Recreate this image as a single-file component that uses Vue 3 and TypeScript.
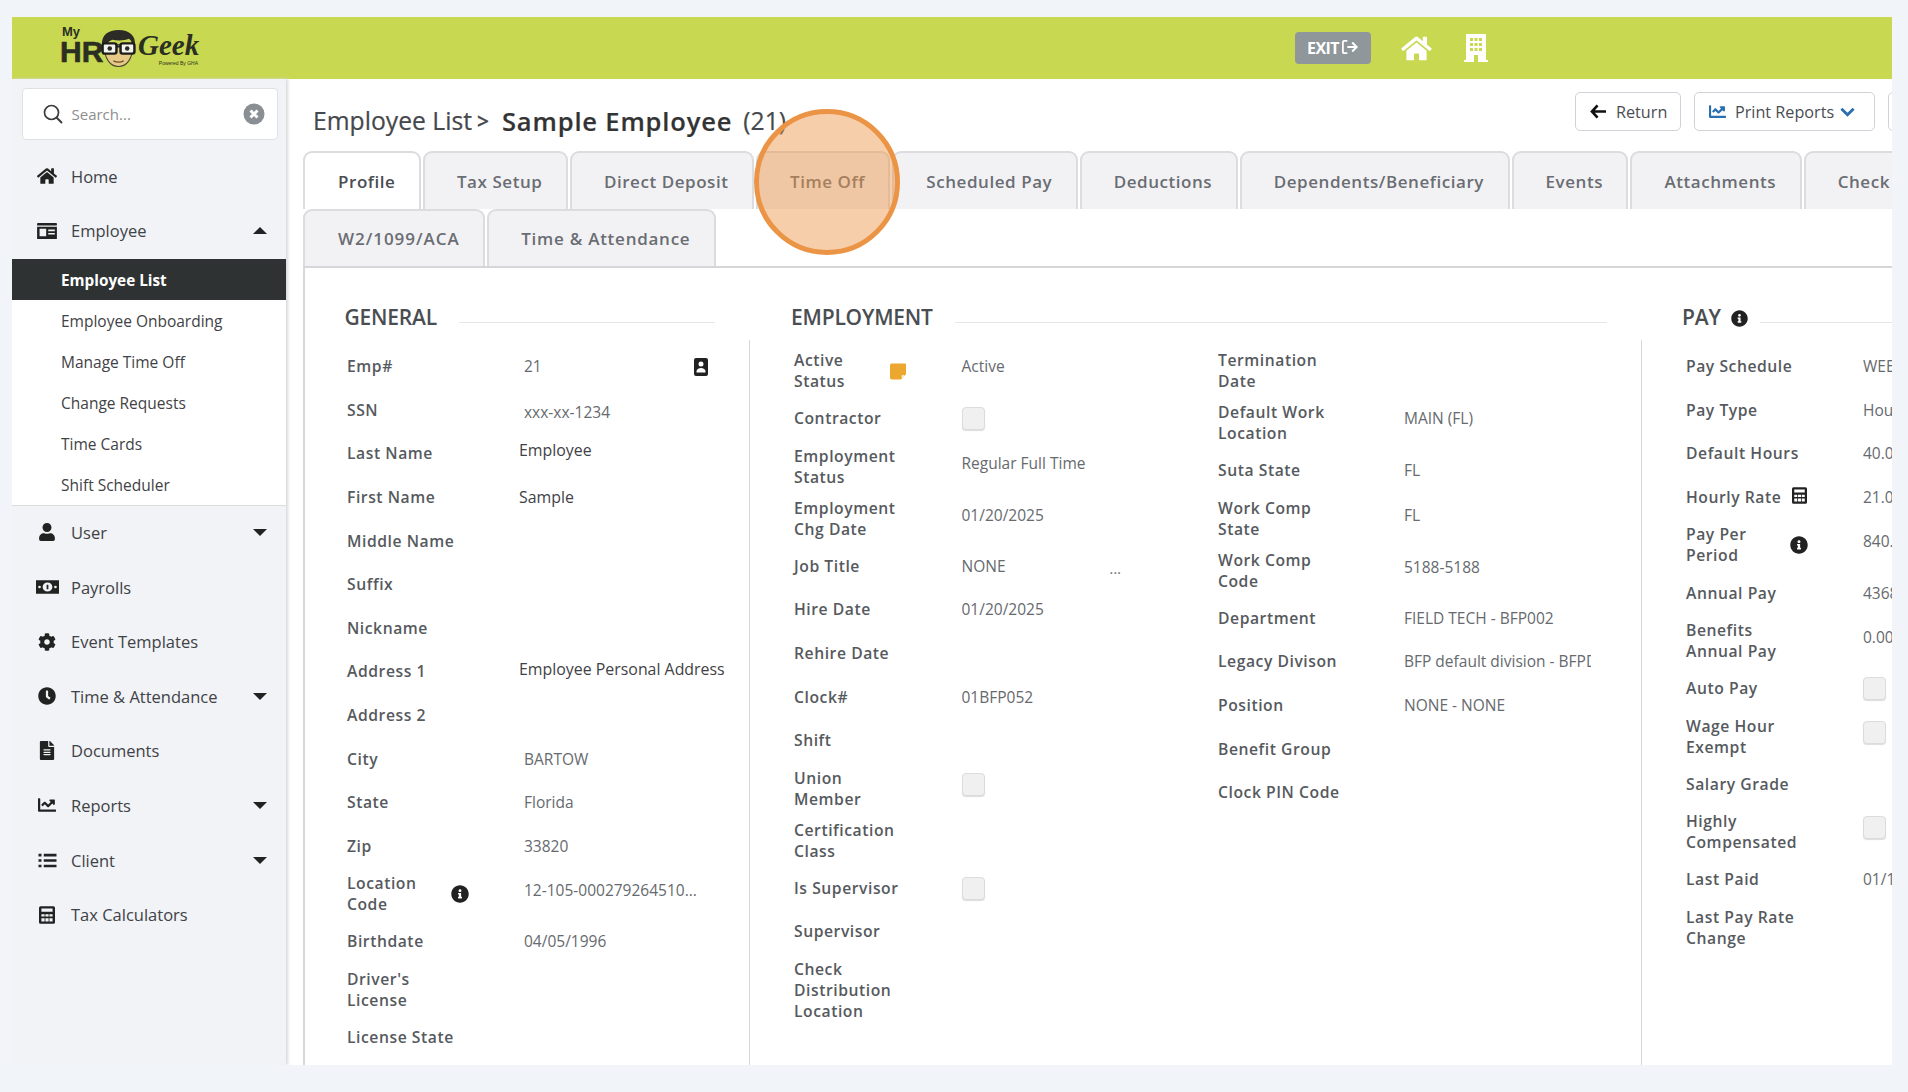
<script setup lang="ts">
type IconKey = keyof typeof icons
interface Row { l: string; v?: string; icon?: IconKey; check?: boolean; cls?: string; more?: boolean }

const icons = {
  home: { box: '0 0 576 512', d: 'M280.37 148.26L96 300.11V464a16 16 0 0 0 16 16l112.06-.29a16 16 0 0 0 15.92-16V368a16 16 0 0 1 16-16h64a16 16 0 0 1 16 16v95.64a16 16 0 0 0 16 16.05L464 480a16 16 0 0 0 16-16V300L295.67 148.26a12.19 12.19 0 0 0-15.3 0zM571.6 251.47L488 182.56V44.05a12 12 0 0 0-12-12h-56a12 12 0 0 0-12 12v72.61L318.47 43a48 48 0 0 0-61 0L4.34 251.47a12 12 0 0 0-1.6 16.9l25.5 31A12 12 0 0 0 45.15 301l235.22-193.74a12.19 12.19 0 0 1 15.3 0L530.9 301a12 12 0 0 0 16.9-1.6l25.5-31a12 12 0 0 0-1.7-16.93z' },
  user: { box: '0 0 448 512', d: 'M224 256c70.7 0 128-57.3 128-128S294.7 0 224 0 96 57.3 96 128s57.3 128 128 128zm89.6 32h-16.7c-22.2 10.2-46.9 16-72.9 16s-50.6-5.8-72.9-16h-16.7C60.2 288 0 348.2 0 422.4V464c0 26.5 21.5 48 48 48h352c26.5 0 48-21.5 48-48v-41.6c0-74.2-60.2-134.4-134.4-134.4z' },
  info: { box: '0 0 512 512', d: 'M256 8C119.043 8 8 119.083 8 256c0 136.997 111.043 248 248 248s248-111.003 248-248C504 119.083 392.957 8 256 8zm0 110c23.196 0 42 18.804 42 42s-18.804 42-42 42-42-18.804-42-42 18.804-42 42-42zm56 254c0 6.627-5.373 12-12 12h-88c-6.627 0-12-5.373-12-12v-24c0-6.627 5.373-12 12-12h12v-64h-12c-6.627 0-12-5.373-12-12v-24c0-6.627 5.373-12 12-12h64c6.627 0 12 5.373 12 12v100h12c6.627 0 12 5.373 12 12v24z' },
  clock: { box: '0 0 512 512', d: 'M256,8C119,8,8,119,8,256S119,504,256,504,504,393,504,256,393,8,256,8Zm92.49,313h0l-20,25a16,16,0,0,1-22.49,2.5h0l-67-49.72a40,40,0,0,1-15-31.23V112a16,16,0,0,1,16-16h32a16,16,0,0,1,16,16V256l58,42.5A16,16,0,0,1,348.49,321Z' },
  file: { box: '0 0 384 512', d: 'M224 136V0H24C10.7 0 0 10.7 0 24v464c0 13.3 10.7 24 24 24h336c13.3 0 24-10.7 24-24V160H248c-13.2 0-24-10.8-24-24zm64 236c0 6.6-5.4 12-12 12H108c-6.6 0-12-5.4-12-12v-8c0-6.6 5.4-12 12-12h168c6.6 0 12 5.4 12 12v8zm0-64c0 6.6-5.4 12-12 12H108c-6.6 0-12-5.4-12-12v-8c0-6.6 5.4-12 12-12h168c6.6 0 12 5.4 12 12v8zm0-72v8c0 6.6-5.4 12-12 12H108c-6.6 0-12-5.4-12-12v-8c0-6.6 5.4-12 12-12h168c6.6 0 12 5.4 12 12zm96-114.1v6.1H256V0h6.1c6.4 0 12.5 2.5 17 7l97.9 98c4.5 4.5 7 10.6 7 16.9z' },
  chart: { box: '0 0 512 512', d: 'M496 384H64V80c0-8.84-7.16-16-16-16H16C7.16 64 0 71.16 0 80v336c0 17.67 14.33 32 32 32h464c8.84 0 16-7.16 16-16v-32c0-8.84-7.16-16-16-16zM464 96H345.94c-21.38 0-32.09 25.85-16.97 40.97l32.4 32.4L288 242.75l-73.37-73.37c-12.5-12.5-32.76-12.5-45.25 0l-68.69 68.69c-6.25 6.25-6.25 16.38 0 22.63l22.62 22.62c6.25 6.25 16.38 6.25 22.63 0L192 237.25l73.37 73.37c12.5 12.5 32.76 12.5 45.25 0l96-96 32.4 32.4c15.12 15.12 40.97 4.41 40.97-16.97V112c.01-8.84-7.15-16-15.99-16z' },
  cog: { box: '0 0 512 512', d: 'M487.4 315.7l-42.6-24.6c4.3-23.2 4.3-47 0-70.2l42.6-24.6c4.9-2.8 7.1-8.6 5.5-14-11.1-35.6-30-67.8-54.7-94.6-3.8-4.1-10-5.1-14.8-2.3L380.8 110c-17.9-15.4-38.5-27.3-60.8-35.1V25.8c0-5.6-3.9-10.5-9.4-11.7-36.7-8.2-74.3-7.8-109.2 0-5.5 1.2-9.4 6.1-9.4 11.7V75c-22.2 7.9-42.8 19.8-60.8 35.1L88.7 85.5c-4.9-2.8-11-1.9-14.8 2.3-24.7 26.7-43.6 58.9-54.7 94.6-1.7 5.4.6 11.2 5.5 14L67.3 221c-4.3 23.2-4.3 47 0 70.2l-42.6 24.6c-4.9 2.8-7.1 8.6-5.5 14 11.1 35.6 30 67.8 54.7 94.6 3.8 4.1 10 5.1 14.8 2.3l42.6-24.6c17.9 15.4 38.5 27.3 60.8 35.1v49.2c0 5.6 3.9 10.5 9.4 11.7 36.7 8.2 74.3 7.8 109.2 0 5.5-1.2 9.4-6.1 9.4-11.7v-49.2c22.2-7.9 42.8-19.8 60.8-35.1l42.6 24.6c4.9 2.8 11 1.9 14.8-2.3 24.7-26.7 43.6-58.9 54.7-94.6 1.5-5.5-.7-11.3-5.6-14.1zM256 336c-44.1 0-80-35.9-80-80s35.9-80 80-80 80 35.9 80 80-35.9 80-80 80z' },
  idcard: { box: '0 0 24 20', d: 'M1 0h22a1 1 0 0 1 1 1v18a1 1 0 0 1-1 1H1a1 1 0 0 1-1-1V1a1 1 0 0 1 1-1zM0 3v1.500h24V3zM3 7v9h8V7zM13.500 8v2h8V8zM13.500 12v2h8v-2z' },
  money: { box: '0 0 26 15', d: 'M0 0h26v15H0zM13 2.500a5.500 5 0 1 0 0 10 5.500 5 0 1 0 0-10zM12 5h2v5h-2zM4 6a1.500 1.500 0 1 0 0 3 1.500 1.500 0 0 0 0-3zM22 6a1.500 1.500 0 1 0 0 3 1.500 1.500 0 0 0 0-3z' },
  list: { box: '0 0 24 20', d: 'M0 1h4v3.500H0zM7 1h17v3.500H7zM0 8.250h4v3.500H0zM7 8.250h17v3.500H7zM0 15.500h4V19H0zM7 15.500h17V19H7z' },
  calc: { box: '0 0 20 22', d: 'M2 0h16a2 2 0 0 1 2 2v18a2 2 0 0 1-2 2H2a2 2 0 0 1-2-2V2a2 2 0 0 1 2-2zM3 3v4h14V3zM3 10v3h4v-3zM8 10v3h4v-3zM13 10v3h4v-3zM3 15v4h4v-4zM8 15v4h4v-4zM13 15v4h4v-4z' },
  portrait: { box: '0 0 14 18', d: 'M2 0h10a2 2 0 0 1 2 2v14a2 2 0 0 1-2 2H2a2 2 0 0 1-2-2V2a2 2 0 0 1 2-2zM7 3.500a2.500 2.500 0 1 0 0 5 2.500 2.500 0 0 0 0-5zM2.500 13.500c0-2 2.200-3.500 4.500-3.500s4.500 1.500 4.500 3.500v1h-9z' },
  note: { box: '0 0 17 17', d: 'M2 0h14a1 1 0 0 1 1 1v10.500L11.500 17H2a2 2 0 0 1-2-2V2a2 2 0 0 1 2-2zM12.500 12.500v3l3-3z' },
  building: { box: '0 0 24 28', d: 'M2 0h20v26h2v2H0v-2h2zM6 4v3h3V4zM10.500 4v3h3V4zM15 4v3h3V4zM6 9v3h3V9zM10.500 9v3h3V9zM15 9v3h3V9zM6 14v3h3v-3zM10.500 14v3h3v-3zM15 14v3h3v-3zM10 21v7h4v-7z' }
}

const nav: { label: string; icon: IconKey; caret?: 'up' | 'down'; sub?: string[] }[] = [
  { label: 'Home', icon: 'home' },
  { label: 'Employee', icon: 'idcard', caret: 'up', sub: ['Employee List', 'Employee Onboarding', 'Manage Time Off', 'Change Requests', 'Time Cards', 'Shift Scheduler'] },
  { label: 'User', icon: 'user', caret: 'down' },
  { label: 'Payrolls', icon: 'money' },
  { label: 'Event Templates', icon: 'cog' },
  { label: 'Time & Attendance', icon: 'clock', caret: 'down' },
  { label: 'Documents', icon: 'file' },
  { label: 'Reports', icon: 'chart', caret: 'down' },
  { label: 'Client', icon: 'list', caret: 'down' },
  { label: 'Tax Calculators', icon: 'calc' }
]

const tabsOne = ['Profile', 'Tax Setup', 'Direct Deposit', 'Time Off', 'Scheduled Pay', 'Deductions', 'Dependents/Beneficiary', 'Events', 'Attachments', 'Check']
const tabsTwo = ['W2/1099/ACA', 'Time & Attendance']

const general: Row[] = [
  { l: 'Emp#', v: '21', cls: 'emp' },
  { l: 'SSN', v: 'xxx-xx-1234', cls: 'down2' },
  { l: 'Last Name', v: 'Employee', cls: 'input up3' },
  { l: 'First Name', v: 'Sample', cls: 'input' },
  { l: 'Middle Name' },
  { l: 'Suffix' },
  { l: 'Nickname' },
  { l: 'Address 1', v: 'Employee Personal Address', cls: 'input up2' },
  { l: 'Address 2' },
  { l: 'City', v: 'BARTOW' },
  { l: 'State', v: 'Florida' },
  { l: 'Zip', v: '33820' },
  { l: 'Location\nCode', v: '12-105-000279264510...', icon: 'info' },
  { l: 'Birthdate', v: '04/05/1996' },
  { l: "Driver's\nLicense" },
  { l: 'License State' }
]

const employment: Row[] = [
  { l: 'Active\nStatus', v: 'Active', icon: 'note', cls: 'lift' },
  { l: 'Contractor', check: true },
  { l: 'Employment\nStatus', v: 'Regular Full Time' },
  { l: 'Employment\nChg Date', v: '01/20/2025' },
  { l: 'Job Title', v: 'NONE', more: true },
  { l: 'Hire Date', v: '01/20/2025' },
  { l: 'Rehire Date' },
  { l: 'Clock#', v: '01BFP052' },
  { l: 'Shift' },
  { l: 'Union\nMember', check: true },
  { l: 'Certification\nClass' },
  { l: 'Is Supervisor', check: true },
  { l: 'Supervisor' },
  { l: 'Check\nDistribution\nLocation' }
]

const employment2: Row[] = [
  { l: 'Termination\nDate' },
  { l: 'Default Work\nLocation', v: 'MAIN (FL)', cls: 'lift' },
  { l: 'Suta State', v: 'FL' },
  { l: 'Work Comp\nState', v: 'FL' },
  { l: 'Work Comp\nCode', v: '5188-5188' },
  { l: 'Department', v: 'FIELD TECH - BFP002' },
  { l: 'Legacy Divison', v: 'BFP default division - BFPDIV' },
  { l: 'Position', v: 'NONE - NONE' },
  { l: 'Benefit Group' },
  { l: 'Clock PIN Code' }
]

const pay: Row[] = [
  { l: 'Pay Schedule', v: 'WEEKLY' },
  { l: 'Pay Type', v: 'Hourly' },
  { l: 'Default Hours', v: '40.00' },
  { l: 'Hourly Rate', v: '21.00', icon: 'calc' },
  { l: 'Pay Per\nPeriod', v: '840.00', icon: 'info' },
  { l: 'Annual Pay', v: '43680.00' },
  { l: 'Benefits\nAnnual Pay', v: '0.00' },
  { l: 'Auto Pay', check: true },
  { l: 'Wage Hour\nExempt', check: true },
  { l: 'Salary Grade' },
  { l: 'Highly\nCompensated', check: true },
  { l: 'Last Paid', v: '01/17/2025' },
  { l: 'Last Pay Rate\nChange' }
]

const sections = [
  { title: 'General', cls: 'sec-general', cols: [{ cls: 'g-rows', rows: general }] },
  { title: 'Employment', cls: 'sec-employment', cols: [{ cls: 'e-rows', rows: employment }, { cls: 'e2-rows', rows: employment2 }] },
  { title: 'Pay', cls: 'sec-pay', cols: [{ cls: 'p-rows', rows: pay }] }
]

const isTwoLine = (r: Row): boolean => r.l.includes('\n')
</script>

<template>
  <div class="page">
    <div class="frame">
      <header class="topbar">
        <div class="logo">
          <div class="logo-hr"><span class="logo-my">My</span><span class="logo-big">HR</span></div>
          <svg class="logo-face" viewBox="0 0 36 36" aria-hidden="true">
            <path d="M4 14c0 14 6 21.500 14 21.500S32 28 32 14z" fill="#e6c887" stroke="#4a4630" stroke-width="1" />
            <path d="M2 15C1 5 8 0 18 0c11 0 17 6 16 15l-3-.5c0-3-1-5-3-6-4 2-11 2-16 1-3 1-5 3-6 6z" fill="#2c2b26" />
            <rect x="2.500" y="13" width="13.500" height="10" rx="2" fill="#f4f4ee" stroke="#1d1d1a" stroke-width="2.400" />
            <rect x="20" y="13" width="13.500" height="10" rx="2" fill="#f4f4ee" stroke="#1d1d1a" stroke-width="2.400" />
            <path d="M16 16h4" stroke="#1d1d1a" stroke-width="2" />
            <circle cx="9.500" cy="18" r="2.200" fill="#2c2b26" />
            <circle cx="26.500" cy="18" r="2.200" fill="#2c2b26" />
            <path d="M13 30c3 1.500 7 1.500 10 0" fill="none" stroke="#6e4e2c" stroke-width="1.300" />
          </svg>
          <div class="logo-geek"><span class="logo-script">Geek</span><span class="logo-tiny">Powered By GHA</span></div>
        </div>
        <div class="top-actions">
          <button class="exit">EXIT
            <svg viewBox="0 0 20 18" class="exit-ico" aria-hidden="true">
              <path d="M7 2H3.500A1.500 1.500 0 0 0 2 3.500v11A1.500 1.500 0 0 0 3.500 16H7" fill="none" stroke="currentColor" stroke-width="2" />
              <path d="M7 9h10M12.500 4l5 5-5 5" fill="none" stroke="currentColor" stroke-width="2.200" />
            </svg>
          </button>
          <svg class="top-home" :viewBox="icons.home.box" aria-hidden="true"><path :d="icons.home.d" /></svg>
          <svg class="top-building" :viewBox="icons.building.box" aria-hidden="true"><path fill-rule="evenodd" :d="icons.building.d" /></svg>
        </div>
      </header>

      <div class="body">
        <aside class="sidebar">
          <div class="search-wrap">
            <div class="search">
              <svg class="search-ico" viewBox="0 0 20 20" aria-hidden="true">
                <circle cx="8.500" cy="8.500" r="7" fill="none" stroke="#3c3c3c" stroke-width="1.700" />
                <path d="M13.500 13.500L19 19" stroke="#3c3c3c" stroke-width="2" />
              </svg>
              <span class="search-text">Search...</span>
              <svg class="search-clear" viewBox="0 0 22 22" aria-hidden="true">
                <circle cx="11" cy="11" r="10.500" fill="#8a8f93" />
                <path d="M7.500 7.500l7 7M14.500 7.500l-7 7" stroke="#fff" stroke-width="3" />
              </svg>
            </div>
          </div>
          <nav>
            <template v-for="item in nav" :key="item.label">
              <div class="nav-item">
                <span class="nav-icon">
                  <svg :class="['ni', 'ni-' + item.icon]" :viewBox="icons[item.icon].box" aria-hidden="true"><path fill-rule="evenodd" :d="icons[item.icon].d" /></svg>
                </span>
                <span class="nav-label">{{ item.label }}</span>
                <svg v-if="item.caret" :class="['caret', item.caret]" viewBox="0 0 14 7" aria-hidden="true"><path d="M0 7L7 0l7 7z" /></svg>
              </div>
              <ul v-if="item.sub" class="sub">
                <li v-for="(s, i) in item.sub" :key="s" :class="{ active: i === 0 }">{{ s }}</li>
              </ul>
            </template>
          </nav>
        </aside>

        <main class="main">
          <div class="titlebar">
            <h1 class="title"><span class="crumb">Employee List</span><span class="gt">&gt;</span><b>Sample Employee</b><span class="num">(21)</span></h1>
            <div class="actions">
              <button class="btn btn-return">
                <svg class="arrow" viewBox="0 0 18 16" aria-hidden="true"><path d="M8 1.500L2 8l6 6.500M2.500 8H17" fill="none" stroke="#111" stroke-width="2.800" /></svg>
                Return
              </button>
              <button class="btn btn-print">
                <svg class="chart" :viewBox="icons.chart.box" aria-hidden="true"><path :d="icons.chart.d" /></svg>
                Print Reports
                <svg class="chev" viewBox="0 0 16 10" aria-hidden="true"><path d="M1.500 1.500L8 8l6.500-6.500" fill="none" stroke="#2a6db0" stroke-width="3" /></svg>
              </button>
              <button class="btn btn-more"></button>
            </div>
          </div>

          <div class="tab-row">
            <div v-for="(t, i) in tabsOne" :key="t" :class="['tab', { on: i === 0 }]">{{ t }}</div>
          </div>
          <div class="tab-row second">
            <div v-for="t in tabsTwo" :key="t" class="tab">{{ t }}</div>
          </div>

          <div class="panel">
            <section v-for="sec in sections" :key="sec.title" :class="['sec', sec.cls]">
              <div class="head">
                <h2>{{ sec.title }}</h2>
                <svg v-if="sec.title === 'Pay'" class="head-info" :viewBox="icons.info.box" aria-hidden="true"><path :d="icons.info.d" /></svg>
                <span class="head-line"></span>
              </div>
              <div class="cols">
                <div v-for="col in sec.cols" :key="col.cls" :class="['rows', col.cls]">
                  <div v-for="r in col.rows" :key="r.l" class="row">
                    <span class="label">{{ r.l }}</span>
                    <span class="ic">
                      <svg v-if="r.icon" :class="['ri', 'ri-' + r.icon]" :viewBox="icons[r.icon].box" aria-hidden="true"><path fill-rule="evenodd" :d="icons[r.icon].d" /></svg>
                    </span>
                    <span v-if="r.check" :class="['check', { two: isTwoLine(r) }]"></span>
                    <span v-else-if="r.v" :class="['val', r.cls, { two: isTwoLine(r) }]">
                      <span class="val-text">{{ r.v }}</span>
                      <span v-if="r.more" class="more">...</span>
                      <svg v-if="r.cls === 'emp'" class="emp-ico" :viewBox="icons.portrait.box" aria-hidden="true"><path fill-rule="evenodd" :d="icons.portrait.d" /></svg>
                    </span>
                  </div>
                </div>
              </div>
            </section>
          </div>

          <div class="spot" aria-hidden="true"></div>
        </main>
      </div>
    </div>
  </div>
</template>

<style>
html, body { margin: 0; background: #f1f5f9; }
</style>

<style scoped>
* { box-sizing: border-box; }
.page {
  width: 1908px; height: 1092px; padding: 17px 16px 27px 12px;
  background: #f1f5f9; overflow: hidden;
  font-family: "Open Sans", "Noto Sans", sans-serif; color: #444;
}
.frame { width: 1880px; height: 1048px; display: flex; flex-direction: column; overflow: hidden; background: #fff; }

.topbar { height: 62px; flex: none; background: #c8d850; display: flex; align-items: center; }
.logo { width: 186px; padding-left: 48px; display: flex; align-items: flex-end; height: 44px; color: #2b2f22; flex: none; }
.logo-hr { display: flex; flex-direction: column; width: 40px; }
.logo-my { font-size: 13px; line-height: 12px; font-weight: 700; font-family: "Liberation Sans", sans-serif; margin-left: 2px; }
.logo-big { font-size: 30px; line-height: 27px; font-weight: 700; font-family: "Liberation Sans", sans-serif; -webkit-text-stroke: .6px #2b2f22; margin-bottom: 5px; }
.logo-face { width: 37px; height: 37px; flex: none; margin-bottom: 3px; }
.logo-geek { display: flex; flex-direction: column; width: 60px; margin-left: 1px; }
.logo-script { font-family: "Liberation Serif", serif; font-style: italic; font-weight: 700; font-size: 29px; line-height: 30px; }
.logo-tiny { font-size: 5px; line-height: 7px; text-align: right; font-family: "Liberation Sans", sans-serif; margin-bottom: 3px; }
.top-actions { margin-left: 1097px; display: flex; align-items: center; }
.exit {
  width: 76px; height: 32px; border: 0; border-radius: 4px; background: #8f979b; color: #fff;
  font: 700 16px "Open Sans", sans-serif; letter-spacing: -.6px; display: flex; align-items: center; justify-content: center; gap: 2px; padding: 0;
}
.exit-ico { width: 18px; height: 16px; margin-top: -2px; }
.top-home { width: 31px; height: 27px; fill: #fff; margin-left: 30px; }
.top-building { width: 24px; height: 28px; fill: #fff; margin-left: 32px; }

.body { flex: 1; min-height: 0; display: flex; }

.sidebar { width: 274px; flex: none; background: #f1f3f6; box-shadow: 2px 0 3px #d8d8d8; position: relative; z-index: 1; }
.search-wrap { height: 71px; padding: 8.500px 8.500px 0 9.500px; }
.search {
  height: 52px; background: #fff; border: 1px solid #dfe1e4; border-radius: 4px;
  display: flex; align-items: center; padding: 0 12px 0 20px;
}
.search-ico { width: 20px; height: 20px; flex: none; }
.search-text { margin-left: 9px; flex: 1; font-size: 15px; color: #8e8e8e; }
.search-clear { width: 22px; height: 22px; flex: none; }

.nav-item { height: 54.600px; display: flex; align-items: center; padding: 0 19px 2px 25px; font-size: 16.500px; color: #3f4246; }
.nav-icon { width: 20px; margin-right: 14px; display: flex; justify-content: center; flex: none; }
.ni { fill: #222; width: 20px; height: 18px; flex: none; }
.ni-idcard { width: 20px; height: 16.500px; }
.ni-money { width: 23px; height: 14px; }
.ni-file { height: 19px; }
.ni-list { width: 19px; height: 15px; }
.ni-calc { width: 16px; height: 18px; }
.nav-label { flex: 1; }
.caret { width: 14px; height: 7px; fill: #222; }
.caret.down { transform: rotate(180deg); }
.sub { list-style: none; margin: 0; padding: 0; background: #fff; border-bottom: 1px solid #dcdcdc; }
.sub li { height: 41px; line-height: 42px; padding-left: 49px; font-size: 15.500px; color: #3f4246; }
.sub li.active { background: #2f3233; color: #fff; font-weight: 700; font-size: 15.300px; }

.main { flex: 1; min-width: 0; padding-left: 17px; position: relative; background: #fff; }
.titlebar { height: 72px; display: flex; justify-content: space-between; }
.title { margin: 0; padding: 25px 0 0 10px; font-size: 24.700px; line-height: 34px; font-weight: 400; color: #45484c; display: flex; white-space: nowrap; -webkit-text-stroke: .2px #45484c; }
.gt { font-size: 21px; font-weight: 600; margin-left: 5px; }
.title b { font-weight: 600; font-size: 25.500px; color: #333; margin-left: 13px; letter-spacing: .85px; }
.num { margin-left: 11px; }
.actions { width: 317px; flex: none; padding-top: 13px; display: flex; gap: 13px; overflow: hidden; align-items: flex-start; }
.btn {
  height: 39px; border: 1px solid #cfd2d6; border-radius: 5px; background: #fff; color: #4a4d52;
  font: 400 16.200px "Open Sans", sans-serif; display: flex; align-items: center; padding: 0; flex: none; white-space: nowrap;
}
.btn-return { width: 106px; padding-left: 14px; gap: 9px; }
.btn-print { width: 181px; padding-left: 13px; }
.btn-more { width: 60px; }
.arrow { width: 17px; height: 15px; }
.chart { width: 19px; height: 17px; fill: #2a6db0; margin-right: 8px; }
.chev { width: 15px; height: 10px; margin-left: 6px; }

.tab-row { display: flex; height: 58px; gap: 2px; }
.tab-row.second { height: 57px; }
.tab {
  flex: none; padding: 0 23.500px 0 32px; display: flex; align-items: center;
  background: #f2f2f4; border: 2px solid #dcdcde; border-bottom: 0; border-radius: 9px 9px 0 0;
  font-size: 17px; font-weight: 600; letter-spacing: .55px; color: #6a6d73; white-space: nowrap;
}
.tab:first-child { padding-left: 33px; padding-right: 23.500px; }
.tab-row.second .tab { letter-spacing: .75px; }
.tab-row.second .tab:first-child { letter-spacing: .95px; }
.tab.on { background: #fff; color: #4a4d52; }

.panel { border-top: 2px solid #d5d6d8; border-left: 2px solid #d8d8da; display: grid; grid-template-columns: 444px 892px 1fr; height: 799px; }
.sec { min-width: 0; display: flex; flex-direction: column; }
.head { height: 72px; flex: none; display: flex; align-items: flex-start; padding: 36px 0 0 39.500px; }
.sec-employment .head { padding-left: 42px; }
.sec-pay .head { padding-left: 41px; }
h2 { margin: 0; font-size: 21px; line-height: 26px; font-weight: 600; color: #4a4e52; text-transform: uppercase; letter-spacing: -.2px; white-space: nowrap; }
.head-line { flex: 1; height: 1px; background: #e6e6e6; margin: 18px 34px 0 22px; }
.sec-pay .head-line { margin-right: 0; margin-left: 12px; }
.head-info { width: 17px; height: 17px; fill: #222; margin: 6px 0 0 10px; flex: none; }
.cols { display: flex; flex: 1; min-height: 0; padding-top: 5px; }
.sec-employment .cols, .sec-pay .cols { border-left: 1px solid #d5d6d8; }
.rows { flex: none; }
.g-rows { padding-left: 42px; width: 100%; }
.e-rows { padding-left: 44px; width: 468px; }
.e2-rows { width: 424px; }
.p-rows { padding-left: 44px; width: 320px; }

.row { display: grid; min-height: 43.600px; padding: 5px 0; align-items: center; font-size: 15.700px; line-height: 21px; }
.g-rows .row { grid-template-columns: 104px 73px 1fr; }
.e-rows .row { grid-template-columns: 96px 71.500px 1fr; }
.e2-rows .row { grid-template-columns: 92px 94px 187px; }
.p-rows .row { grid-template-columns: 104px 73px 1fr; }
.label { white-space: pre; font-weight: 600; letter-spacing: .55px; color: #565a5e; }
.ic { display: flex; align-items: center; }
.ri { width: 18px; height: 18px; fill: #222; }
.ri-note { fill: #eca72f; width: 16px; height: 17px; }
.ri-calc { width: 15px; height: 17px; margin: -4px 0 0 2px; }
.val { color: #666a6e; white-space: nowrap; font-size: 15.500px; overflow: hidden; display: flex; align-items: center; min-width: 0; }
.g-rows .val, .e-rows .val { overflow: visible; }
.val.two { margin-bottom: 7px; }
.val.lift { margin-bottom: 10px; }
.input { color: #3f4246; margin-left: -5px; font-size: 15.900px; }
.up3 { position: relative; top: -3px; }
.up2 { position: relative; top: -2px; }
.down2 { position: relative; top: 2px; }
.more { margin-left: 104px; font-size: 14px; position: relative; top: 2px; letter-spacing: .2px; }
.emp { position: relative; width: 184px; justify-content: space-between; }
.emp-ico { width: 14px; height: 18px; fill: #222; }
.check { width: 23px; height: 23px; border-radius: 4px; background: #f0f0f0; border: 1px solid #dcdcdc; box-shadow: 0 1px 1px #ddd; }
.check.two { margin-bottom: 9px; }

.spot {
  position: absolute; left: 468px; top: 30px; width: 146px; height: 146px; border-radius: 50%;
  border: 5px solid #ec9445; background: rgba(235, 148, 69, .46); z-index: 2;
}
</style>
